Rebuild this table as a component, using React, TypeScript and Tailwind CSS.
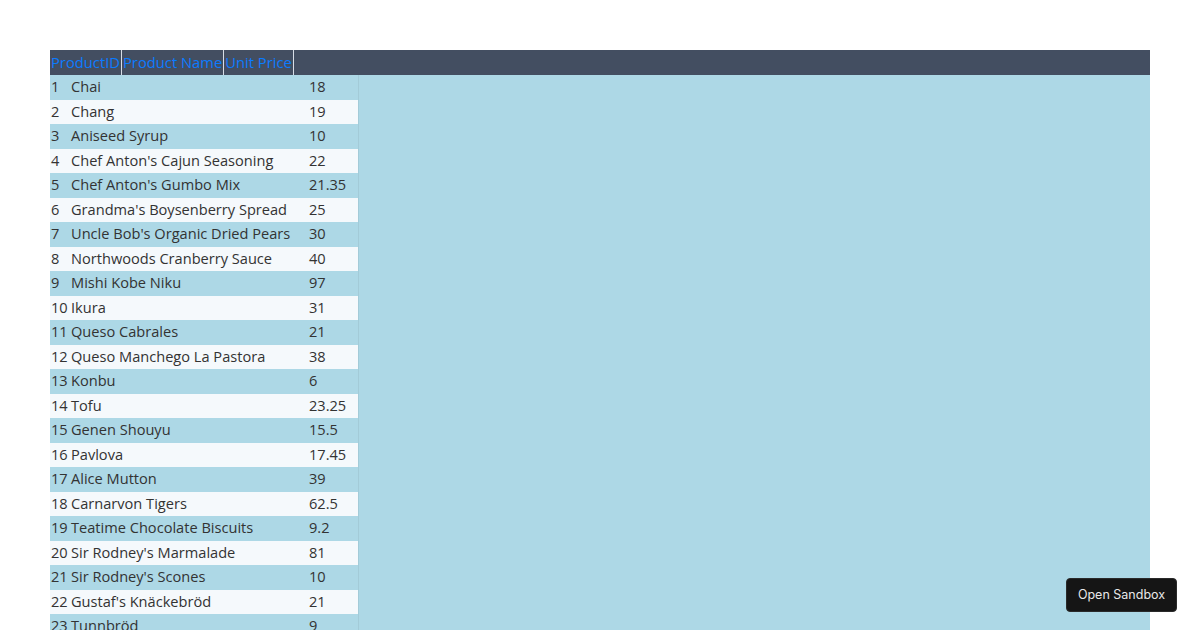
import React from "react";

const products: [number, string, number][] = [
  [1, "Chai", 18],
  [2, "Chang", 19],
  [3, "Aniseed Syrup", 10],
  [4, "Chef Anton's Cajun Seasoning", 22],
  [5, "Chef Anton's Gumbo Mix", 21.35],
  [6, "Grandma's Boysenberry Spread", 25],
  [7, "Uncle Bob's Organic Dried Pears", 30],
  [8, "Northwoods Cranberry Sauce", 40],
  [9, "Mishi Kobe Niku", 97],
  [10, "Ikura", 31],
  [11, "Queso Cabrales", 21],
  [12, "Queso Manchego La Pastora", 38],
  [13, "Konbu", 6],
  [14, "Tofu", 23.25],
  [15, "Genen Shouyu", 15.5],
  [16, "Pavlova", 17.45],
  [17, "Alice Mutton", 39],
  [18, "Carnarvon Tigers", 62.5],
  [19, "Teatime Chocolate Biscuits", 9.2],
  [20, "Sir Rodney's Marmalade", 81],
  [21, "Sir Rodney's Scones", 10],
  [22, "Gustaf's Knäckebröd", 21],
  [23, "Tunnbröd", 9],
];

export default function App() {
  return (
    <div className="h-screen overflow-hidden bg-white pt-[50px] px-[50px] font-['Open_Sans',sans-serif] text-[14.6px]">
      {/* Header bar */}
      <div className="flex h-[25px] bg-[#434e61]">
        {["ProductID", "Product Name", "Unit Price"].map((h) => (
          <div
            key={h}
            className="flex items-center pb-px px-px border-r border-[#d7dde6] text-[14.75px] text-[#0b7bff] leading-none"
          >
            {h}
          </div>
        ))}
      </div>

      {/* Body */}
      <div className="bg-[#add8e6] h-full">
        <div className="w-[309px] border-r border-[#a3cbd8]">
          {products.map(([id, name, price], i) => (
            <div
              key={id}
              className={`grid grid-cols-[20px_238px_51px] h-[24.5px] items-center text-[#333] ${
                i % 2 === 1 ? "bg-[#f5f9fc]" : "bg-[#add8e6]"
              }`}
            >
              <span className="pl-px whitespace-nowrap">{id}</span>
              <span className="pl-px whitespace-nowrap">{name}</span>
              <span className="pl-px whitespace-nowrap">{price}</span>
            </div>
          ))}
        </div>
      </div>

      <button className="fixed left-[1066px] top-[578px] w-[111px] h-[34px] rounded-[4px] bg-[#151515] border border-[#2a2a2a] text-[12.5px] text-[#e8e8e8] font-['Inter',sans-serif]">
        Open Sandbox
      </button>
    </div>
  );
}
